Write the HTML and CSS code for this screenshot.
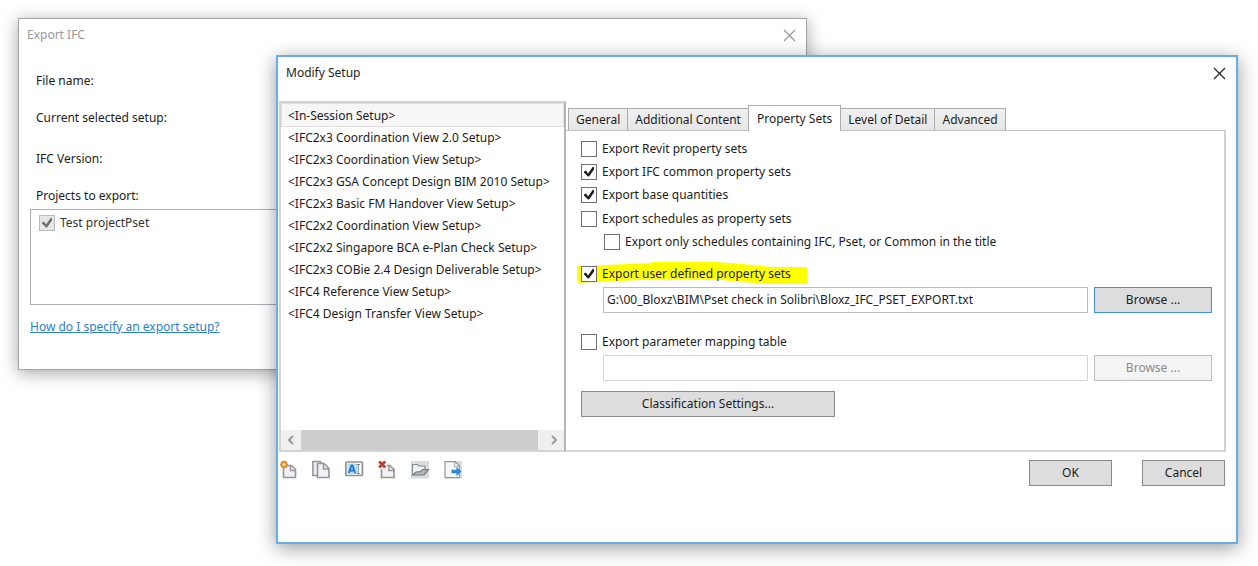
FILE: index.html
```html
<!DOCTYPE html>
<html lang="en">
<head>
<meta charset="utf-8">
<title>Modify Setup</title>
<link rel="stylesheet" href="styles.css">
</head>
<body>
<main class="desktop">
  <section class="window window-export" aria-label="Export IFC">
    <header class="titlebar">
      <h1 class="title">Export IFC</h1>
      <button class="close" type="button" aria-label="Close Export IFC">
        <svg width="13" height="13" viewBox="0 0 13 13"><path d="M1 1l11 11M12 1L1 12"/></svg>
      </button>
    </header>
    <div class="export-body">
      <p class="field">File name:</p>
      <p class="field">Current selected setup:</p>
      <p class="field">IFC Version:</p>
      <p class="field">Projects to export:</p>
      <div class="projects">
        <label class="check"><input type="checkbox" checked disabled>Test projectPset</label>
      </div>
      <a class="help" href="#">How do I specify an export setup?</a>
    </div>
  </section>

  <section class="window window-setup" aria-label="Modify Setup">
    <header class="titlebar">
      <h2 class="title">Modify Setup</h2>
      <button class="close" type="button" aria-label="Close Modify Setup">
        <svg width="13" height="13" viewBox="0 0 13 13"><path d="M1 1l11 11M12 1L1 12"/></svg>
      </button>
    </header>
    <div class="setup-body">
      <div class="setups">
        <ul class="setup-list">
          <li class="setup selected">&lt;In-Session Setup&gt;</li>
          <li class="setup">&lt;IFC2x3 Coordination View 2.0 Setup&gt;</li>
          <li class="setup">&lt;IFC2x3 Coordination View Setup&gt;</li>
          <li class="setup">&lt;IFC2x3 GSA Concept Design BIM 2010 Setup&gt;</li>
          <li class="setup">&lt;IFC2x3 Basic FM Handover View Setup&gt;</li>
          <li class="setup">&lt;IFC2x2 Coordination View Setup&gt;</li>
          <li class="setup">&lt;IFC2x2 Singapore BCA e-Plan Check Setup&gt;</li>
          <li class="setup">&lt;IFC2x3 COBie 2.4 Design Deliverable Setup&gt;</li>
          <li class="setup">&lt;IFC4 Reference View Setup&gt;</li>
          <li class="setup">&lt;IFC4 Design Transfer View Setup&gt;</li>
        </ul>
        <div class="scrollbar">
          <button class="arrow" type="button" aria-label="Scroll left"><svg width="6" height="10" viewBox="0 0 6 10"><path d="M5 1L1 5l4 4"/></svg></button>
          <div class="track"><div class="thumb"></div></div>
          <button class="arrow" type="button" aria-label="Scroll right"><svg width="6" height="10" viewBox="0 0 6 10"><path d="M1 1l4 4-4 4"/></svg></button>
        </div>
      </div>

      <div class="settings">
        <div class="tabs" role="tablist">
          <button class="tab" type="button" role="tab">General</button>
          <button class="tab" type="button" role="tab">Additional Content</button>
          <button class="tab active" type="button" role="tab" aria-selected="true">Property Sets</button>
          <button class="tab" type="button" role="tab">Level of Detail</button>
          <button class="tab" type="button" role="tab">Advanced</button>
        </div>
        <div class="pane" role="tabpanel">
          <label class="check"><input type="checkbox">Export Revit property sets</label>
          <label class="check"><input type="checkbox" checked>Export IFC common property sets</label>
          <label class="check"><input type="checkbox" checked>Export base quantities</label>
          <div class="schedules">
            <label class="check"><input type="checkbox">Export schedules as property sets</label>
            <label class="check nested"><input type="checkbox">Export only schedules containing IFC, Pset, or Common in the title</label>
          </div>
          <div class="user-sets">
            <label class="check marked"><input type="checkbox" checked>Export user defined property sets</label>
            <div class="file-row">
              <input class="path" type="text" aria-label="Property set file" value="G:\00_Bloxz\BIM\Pset check in Solibri\Bloxz_IFC_PSET_EXPORT.txt">
              <button class="btn browse focused" type="button">Browse ...</button>
            </div>
          </div>
          <div class="mapping">
            <label class="check"><input type="checkbox">Export parameter mapping table</label>
            <div class="file-row">
              <input class="path" type="text" aria-label="Mapping table file" disabled>
              <button class="btn browse" type="button" disabled>Browse ...</button>
            </div>
          </div>
          <button class="btn classification" type="button">Classification Settings...</button>
        </div>
      </div>
    </div>
    <footer class="footer">
      <div class="tools">
        <button class="tool" type="button" aria-label="New setup">
          <svg width="20" height="20" viewBox="0 0 20 20"><path d="M4.500 8v9.500h12V9.500L12.500 5.500H8" fill="#f2f2f4" stroke="#94959a" stroke-width="1.600"/><path d="M11.500 5v5.500H17" fill="none" stroke="#94959a" stroke-width="1.500"/><circle cx="5" cy="4.500" r="2.600" fill="#fbe5bd" stroke="#dc8c22" stroke-width="2"/><path d="M5 .500v1.500M5 7v1.500M1 4.500h1.500M7.500 4.500H9M2.200 1.700l1 1M6.800 6.300l1 1M7.800 1.700l-1 1M3.200 6.300l-1 1" stroke="#dc8c22" stroke-width="1.200"/></svg>
        </button>
        <button class="tool" type="button" aria-label="Duplicate setup">
          <svg width="20" height="20" viewBox="0 0 20 20"><path d="M5 15.500H0.900v-14H8l2.500 2.500" fill="#eee" stroke="#94959a" stroke-width="1.600"/><path d="M5.500 3.500h6.500l5 5v9H5.500z" fill="#f2f2f4" stroke="#94959a" stroke-width="1.600"/><path d="M11.500 3.500V9H17" fill="none" stroke="#94959a" stroke-width="1.500"/></svg>
        </button>
        <button class="tool" type="button" aria-label="Rename setup">
          <svg width="20" height="20" viewBox="0 0 20 20"><rect x="0.900" y="2" width="16.500" height="13.500" rx="1" fill="#fff" stroke="#8f9095" stroke-width="1.700"/><rect x="2.500" y="3.500" width="9.500" height="10.500" fill="#b5dcf6"/><path d="M3.800 13L6.500 5.500h1L10.200 13M4.800 10.500h4.500" fill="none" stroke="#2c78c4" stroke-width="1.900"/><path d="M11.500 4.500H15M13.200 4.500v9M11.500 13.500H15" fill="none" stroke="#85868b" stroke-width="1.100"/></svg>
        </button>
        <button class="tool" type="button" aria-label="Delete setup">
          <svg width="20" height="20" viewBox="0 0 20 20"><path d="M3.500 9v8.500h12.500V9.500L12 5.500H9" fill="#f2f2f4" stroke="#94959a" stroke-width="1.600"/><path d="M11 5v5.500h5.500" fill="none" stroke="#94959a" stroke-width="1.500"/><path d="M1.200 1.500l6 6M7.200 1.500l-6 6" stroke="#c33b2e" stroke-width="2.800"/></svg>
        </button>
        <button class="tool" type="button" aria-label="Open setup">
          <svg width="20" height="20" viewBox="0 0 20 20"><rect x="0" y="1" width="18" height="17.500" fill="#dcdcdc"/><path d="M1.500 14.500V4.500h5l1.500 1.500h6v4.500" fill="#f3f3f3" stroke="#858b92" stroke-width="1.200"/><path d="M1.500 15l3.500-3 4.500-.500 2-2h6L13 15z" fill="#aeb6bd" stroke="#747c84" stroke-width="1.200"/></svg>
        </button>
        <button class="tool" type="button" aria-label="Save setup">
          <svg width="20" height="20" viewBox="0 0 20 20"><rect x="1" y="1" width="17" height="17.500" fill="#dcdcdc"/><path d="M1 1.700h10l4.500 4v12H1z" fill="#f7f7f7" stroke="#969696" stroke-width="1.200"/><path d="M10.500 2v4.500h5" fill="none" stroke="#aaa" stroke-width="1"/><path d="M7.500 9.800h5V6.800l5 4.700-5 4.700v-3h-5z" fill="#2e8ad8"/></svg>
        </button>
      </div>
      <div class="actions">
        <button class="btn" type="button">OK</button>
        <button class="btn" type="button">Cancel</button>
      </div>
    </footer>
  </section>
</main>
</body>
</html>
```
FILE: styles.css
```css
* { box-sizing: border-box; }

body {
  margin: 0;
  background: #fff;
  color: #1c1c1c;
  font: 12px/20px "Noto Sans", "Open Sans", sans-serif;
}

button, input { font: inherit; color: inherit; }

.desktop {
  position: relative;
  min-height: 100vh;
  overflow: hidden;
}

.window {
  position: absolute;
  background: #fff;
}

.window-export {
  top: 18px;
  left: 18px;
  right: 451px;
  border: 1px solid #a6a6a6;
  box-shadow: 0 3px 16px rgba(0, 0, 0, .36);
}

.window-setup {
  top: 55px;
  left: 276px;
  right: 20px;
  border: 2px solid #67aee8;
  box-shadow: 0 4px 18px rgba(0, 0, 0, .4);
}

.titlebar {
  display: flex;
  align-items: center;
  justify-content: space-between;
  padding: 6px 10px 18px 8px;
}

.title {
  margin: 0;
  font-size: 12px;
  font-weight: 400;
}

.close {
  display: flex;
  padding: 0;
  border: 0;
  background: none;
}

.close path {
  fill: none;
  stroke: #222;
  stroke-width: 1.2;
}

.window-export .title { color: #999; }
.window-export .close path { stroke: #999; }

.export-body {
  display: flex;
  flex-direction: column;
  align-items: flex-start;
  padding: 8px 11px 32px;
}

.field {
  margin: 0 0 17px 6px;
}

.field:nth-child(2) { margin-bottom: 21px; }
.field:nth-child(4) { margin-bottom: 3px; }

.projects {
  width: 100%;
  min-height: 96px;
  margin-bottom: 12px;
  padding: 1px 8px;
  border: 1px solid #abadb3;
}

.projects .check { color: #333; }

.help { color: #2a7fd0; }

.check {
  display: flex;
  align-items: center;
  gap: 5px;
  width: fit-content;
  height: 23px;
}

.check input {
  appearance: none;
  flex: none;
  width: 16px;
  height: 16px;
  margin: 0;
  border: 1px solid #707070;
  background: #fff;
}

.check input:checked::before {
  content: "";
  display: block;
  width: 14px;
  height: 14px;
  background: #1c1c1c;
  clip-path: polygon(2px 7px, 4px 6px, 6px 9px, 11px 2px, 12px 3px, 12px 5px, 7px 12px, 6px 12px, 2px 8px);
}

.check input:disabled {
  border-color: #bcbcbc;
  background: #e6e6e6;
}

.check input:disabled::before { background: #707070; }

.setup-body {
  display: grid;
  grid-template-columns: 287px 1fr;
  padding: 0 10px 0 1px;
}

.setups {
  display: flex;
  flex-direction: column;
  justify-content: space-between;
  border: 2px solid #d2d3d6;
  border-right-color: #b4b5b9;
}

.setup-list {
  margin: 0;
  padding: 0;
  list-style: none;
}

.setup {
  height: 22px;
  padding-left: 7px;
  line-height: 22px;
  white-space: nowrap;
}

.setup.selected {
  height: 24px;
  line-height: 24px;
  border: 1px solid #dedede;
  padding-left: 6px;
  background: #f6f6f6;
}

.scrollbar {
  display: flex;
  height: 20px;
  background: #f0f0f0;
}

.arrow {
  display: flex;
  align-items: center;
  justify-content: center;
  width: 20px;
  padding: 0;
  border: 0;
  background: none;
}

.arrow path {
  fill: none;
  stroke: #999;
  stroke-width: 2;
}

.track { flex: 1; padding-right: 6px; }

.thumb {
  height: 100%;
  background: #cdcdcd;
}

.settings {
  display: flex;
  flex-direction: column;
  padding-top: 4px;
}

.tabs {
  display: flex;
  align-items: flex-end;
  padding-left: 2px;
}

.tab {
  height: 23px;
  margin: 0 0 -1px -1px;
  padding: 0 7px;
  border: 1px solid #acacac;
  background: linear-gradient(#f0f0f0, #e6e6e6);
  line-height: 20px;
  white-space: nowrap;
}

.tab:first-child { margin-left: 0; }

.tab.active {
  z-index: 1;
  height: 26px;
  padding: 0 8px;
  border-bottom: 0;
  background: #fff;
}

.pane {
  flex: 1;
  padding: 6px 12px 33px 15px;
  border: 1px solid #bfc0c2;
  border-left: 0;
  border-right: 2px solid #d0d1d3;
  border-bottom: 2px solid #d6d6d6;
}

.schedules { padding-top: 1px; }
.nested { margin-left: 23px; }
.user-sets { padding-top: 9px; }
.mapping { padding-top: 17px; }

.marked {
  position: relative;
  z-index: 0;
}

.marked::before {
  content: "";
  position: absolute;
  z-index: -1;
  top: 0;
  left: -4px;
  width: 231px;
  height: 23px;
  background: #ff0;
  clip-path: polygon(0 4px, 30px 3px, 75px 1px, 75px 0, 138px 0, 165px 2px, 195px 5px, 230px 5px, 231px 22px, 193px 22px, 163px 20px, 136px 17px, 63px 18px, 20px 20px, 0 21px);
}

.file-row {
  display: flex;
  gap: 6px;
  margin-top: 2px;
  padding-left: 22px;
}

.path {
  flex: 1;
  min-width: 0;
  height: 26px;
  padding: 0 3px 2px;
  border: 1px solid #b9bbc1;
  background: #fff;
}

.path:disabled { border-color: #d5d6d8; }

.btn {
  width: 83px;
  height: 26px;
  padding: 0;
  border: 1px solid #8a8a8a;
  background: #ddd;
}

.browse { width: 118px; }

.focused {
  border-color: #3c93de;
}

.btn:disabled {
  border-color: #bcbec4;
  background: #f4f4f4;
  color: #8a8a8a;
}

.classification {
  width: 254px;
  margin-top: 10px;
}

.footer {
  display: flex;
  justify-content: space-between;
  align-items: flex-start;
  padding: 8px 11px 56px 1px;
}

.tools {
  display: flex;
  gap: 13px;
}

.tool {
  display: flex;
  padding: 0;
  border: 0;
  background: none;
}

.actions {
  display: flex;
  gap: 30px;
}
```
